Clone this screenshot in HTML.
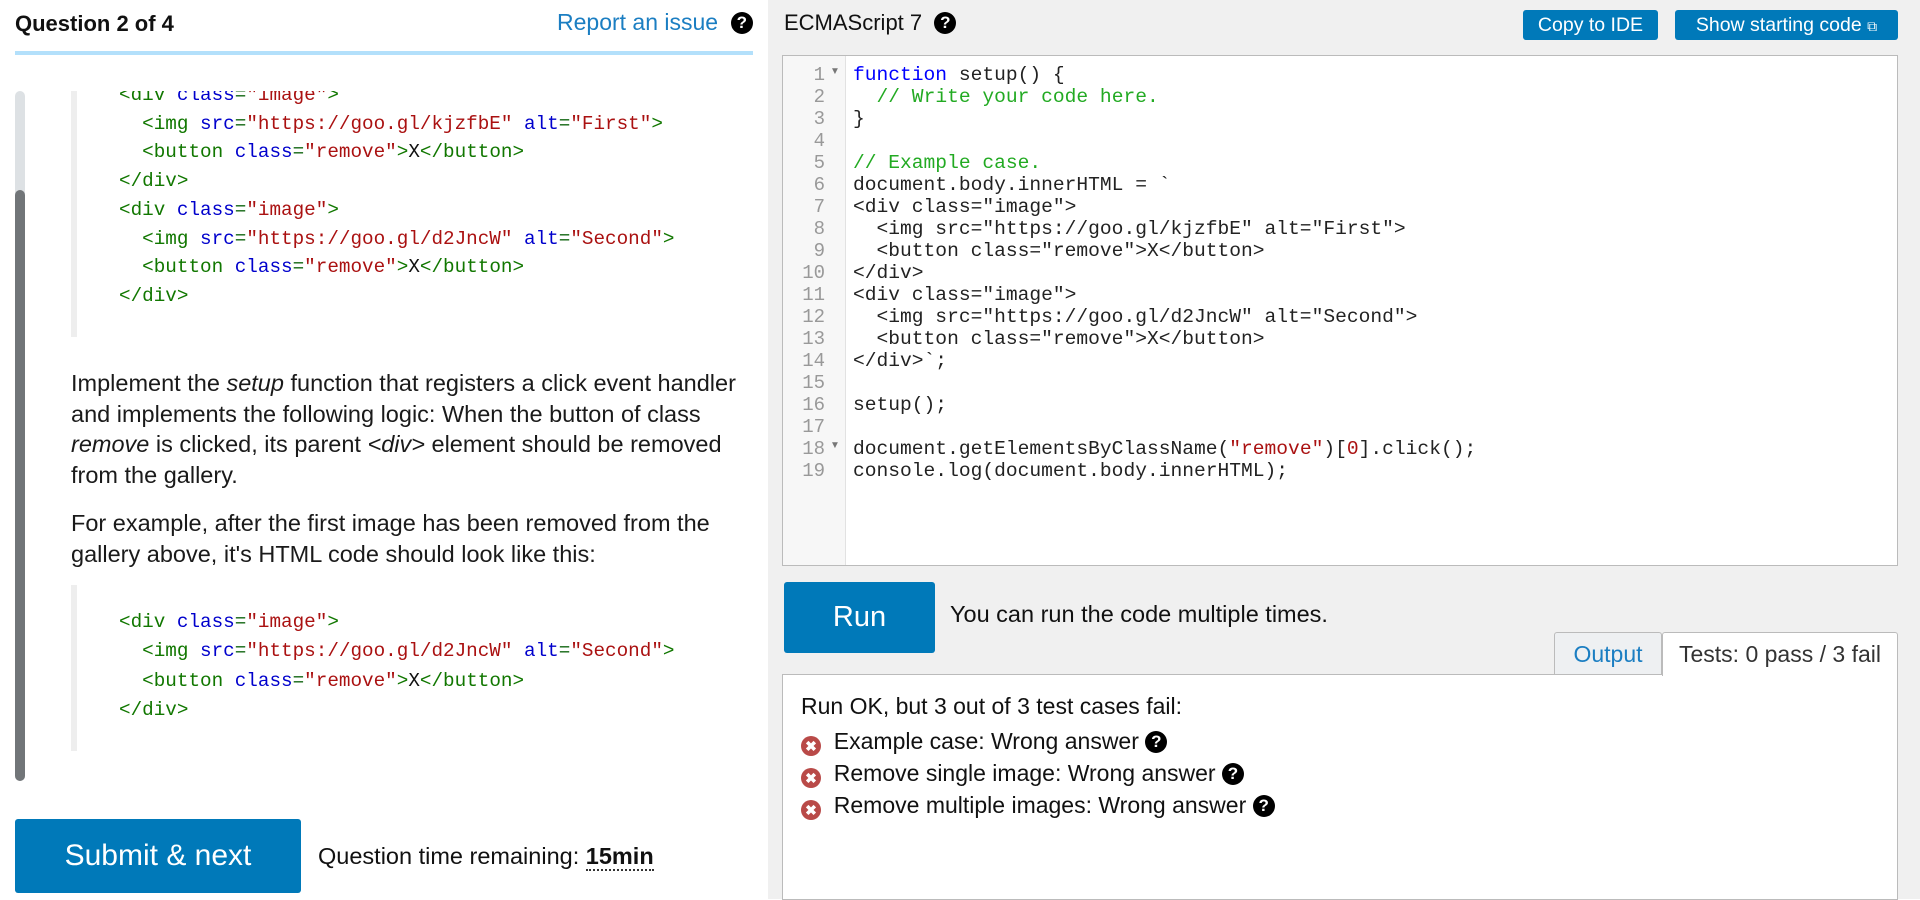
<!DOCTYPE html>
<html><head><meta charset="utf-8"><style>
*{box-sizing:border-box;margin:0;padding:0}
body{width:1920px;height:899px;overflow:hidden;font-family:"Liberation Sans",sans-serif;background:#fff;position:relative;color:#111}
.abs{position:absolute}
.left{left:0;top:0;width:768px;height:899px;background:#fff}
.right{left:768px;top:0;width:1152px;height:899px;background:#f0f0f0}
.q{left:15px;top:11px;font-size:22px;font-weight:bold}
.rep{left:557px;top:9px;font-size:23px;color:#1b7ec2}
.help{display:inline-block;width:22px;height:22px;border-radius:50%;background:#000;color:#fff;font-size:17px;font-weight:bold;text-align:center;line-height:22px;vertical-align:2px}
.bl{left:15px;top:51px;width:738px;height:4px;background:#b3e0fb}
.track{left:15px;top:91px;width:10px;height:690px;background:#dde1e4;border-radius:5px}
.thumb{left:15px;top:190px;width:10px;height:591px;background:#717578;border-radius:5px}
.cb{left:71px;width:6px;background:#eee}
pre{font-family:"Liberation Mono",monospace}
.code1{left:119px;font-size:19.3px;line-height:28.7px;color:#116611}
.t{color:#117700}.a{color:#0000cc}.s{color:#aa1111}.x{color:#111}
.para{left:71px;width:672px;font-size:23.5px;line-height:30.6px;color:#1a1a1a}
.btn{background:#0079b9;color:#fff;text-align:center;border-radius:3px}
.ed{left:782px;top:55px;width:1116px;height:511px;background:#fff;border:1px solid #bbb}
.gut{left:0;top:0;width:63px;height:509px;background:#f7f7f7;border-right:1px solid #e2e2e2}
.ln{left:0;top:8px;width:42px;text-align:right;font-size:19px;line-height:22px;color:#999}
.ec{left:70px;top:8px;font-size:19.6px;line-height:22px;color:#222}
.kw{color:#0000ff}.cm{color:#22aa22}.st{color:#aa1111}
.fx{display:inline-block;width:20px;height:20px;border-radius:50%;background:#b94a48;color:#fff;font-size:14px;font-weight:bold;text-align:center;line-height:20px;vertical-align:-2px}
</style></head><body>
<div class="abs left"></div>
<div class="abs right"></div>
<div class="abs q">Question 2 of 4</div>
<div class="abs rep">Report an issue &nbsp;<span class="help">?</span></div>
<div class="abs bl"></div>
<div class="abs track"></div>
<div class="abs thumb"></div>
<div class="abs cb" style="top:91px;height:246px"></div>
<div class="abs" style="left:80px;top:91px;width:680px;height:246px;overflow:hidden">
<pre class="abs code1" style="left:39px;top:-10px"><span class="t">&lt;div</span> <span class="a">class</span>=<span class="s">"image"</span><span class="t">&gt;</span>
  <span class="t">&lt;img</span> <span class="a">src</span>=<span class="s">"https://goo.gl/kjzfbE"</span> <span class="a">alt</span>=<span class="s">"First"</span><span class="t">&gt;</span>
  <span class="t">&lt;button</span> <span class="a">class</span>=<span class="s">"remove"</span><span class="t">&gt;</span><span class="x">X</span><span class="t">&lt;/button&gt;</span>
<span class="t">&lt;/div&gt;</span>
<span class="t">&lt;div</span> <span class="a">class</span>=<span class="s">"image"</span><span class="t">&gt;</span>
  <span class="t">&lt;img</span> <span class="a">src</span>=<span class="s">"https://goo.gl/d2JncW"</span> <span class="a">alt</span>=<span class="s">"Second"</span><span class="t">&gt;</span>
  <span class="t">&lt;button</span> <span class="a">class</span>=<span class="s">"remove"</span><span class="t">&gt;</span><span class="x">X</span><span class="t">&lt;/button&gt;</span>
<span class="t">&lt;/div&gt;</span></pre></div>
<div class="abs para" style="top:368px">Implement the <i>setup</i> function that registers a click event handler and implements the following logic: When the button of class <i>remove</i> is clicked, its parent <i>&lt;div&gt;</i> element should be removed from the gallery.</div>
<div class="abs para" style="top:508px">For example, after the first image has been removed from the gallery above, it's HTML code should look like this:</div>
<div class="abs cb" style="top:585px;height:166px"></div>
<pre class="abs code1" style="top:608px;line-height:29.4px"><span class="t">&lt;div</span> <span class="a">class</span>=<span class="s">"image"</span><span class="t">&gt;</span>
  <span class="t">&lt;img</span> <span class="a">src</span>=<span class="s">"https://goo.gl/d2JncW"</span> <span class="a">alt</span>=<span class="s">"Second"</span><span class="t">&gt;</span>
  <span class="t">&lt;button</span> <span class="a">class</span>=<span class="s">"remove"</span><span class="t">&gt;</span><span class="x">X</span><span class="t">&lt;/button&gt;</span>
<span class="t">&lt;/div&gt;</span></pre>
<div class="abs btn" style="left:15px;top:819px;width:286px;height:74px;font-size:30px;line-height:74px">Submit &amp; next</div>
<div class="abs" style="left:318px;top:843px;font-size:23.5px">Question time remaining: <b style="border-bottom:2px dotted #333">15min</b></div>

<div class="abs" style="left:784px;top:10px;font-size:22px">ECMAScript 7 &nbsp;<span class="help">?</span></div>
<div class="abs btn" style="left:1523px;top:10px;width:135px;height:30px;font-size:19.5px;line-height:30px">Copy to IDE</div>
<div class="abs btn" style="left:1675px;top:10px;width:223px;height:30px;font-size:19.5px;line-height:30px">Show starting code <span style="font-size:14px">&#x29C9;</span></div>
<div class="abs ed">
<div class="abs gut"></div>
<pre class="abs ln">1
2
3
4
5
6
7
8
9
10
11
12
13
14
15
16
17
18
19</pre>
<div class="abs" style="left:47px;top:10px;font-size:10px;color:#777">▼</div>
<div class="abs" style="left:47px;top:384px;font-size:10px;color:#777">▼</div>
<pre class="abs ec"><span class="kw">function</span> setup() {
  <span class="cm">// Write your code here.</span>
}

<span class="cm">// Example case.</span>
document.body.innerHTML = `
&lt;div class="image"&gt;
  &lt;img src="https://goo.gl/kjzfbE" alt="First"&gt;
  &lt;button class="remove"&gt;X&lt;/button&gt;
&lt;/div&gt;
&lt;div class="image"&gt;
  &lt;img src="https://goo.gl/d2JncW" alt="Second"&gt;
  &lt;button class="remove"&gt;X&lt;/button&gt;
&lt;/div&gt;`;

setup();

document.getElementsByClassName(<span class="st">"remove"</span>)[<span class="st">0</span>].click();
console.log(document.body.innerHTML);</pre>
</div>
<div class="abs btn" style="left:784px;top:582px;width:151px;height:71px;font-size:29px;line-height:71px">Run</div>
<div class="abs" style="left:950px;top:601px;font-size:23.5px">You can run the code multiple times.</div>
<div class="abs" style="left:1554px;top:632px;width:108px;height:43px;border:1px solid #bbb;border-bottom:none;background:#eef0f2;color:#1b7ec2;font-size:23px;text-align:center;line-height:42px;border-radius:3px 3px 0 0">Output</div>
<div class="abs" style="left:1662px;top:632px;width:236px;height:44px;border:1px solid #bbb;border-bottom:none;background:#fff;color:#333;font-size:23px;text-align:center;line-height:42px;z-index:2;border-radius:3px 3px 0 0">Tests: 0 pass / 3 fail</div>
<div class="abs" style="left:782px;top:674px;width:1116px;height:226px;border:1px solid #bbb;background:#fff"></div>
<div class="abs" style="left:801px;top:690px;font-size:23px;line-height:32px">Run OK, but 3 out of 3 test cases fail:</div>
<div class="abs" style="left:801px;top:725px;font-size:23px;line-height:32px">
<div><span class="fx">✖</span>&nbsp; Example case: Wrong answer <span class="help">?</span></div>
<div><span class="fx">✖</span>&nbsp; Remove single image: Wrong answer <span class="help">?</span></div>
<div><span class="fx">✖</span>&nbsp; Remove multiple images: Wrong answer <span class="help">?</span></div>
</div>
</body></html>
